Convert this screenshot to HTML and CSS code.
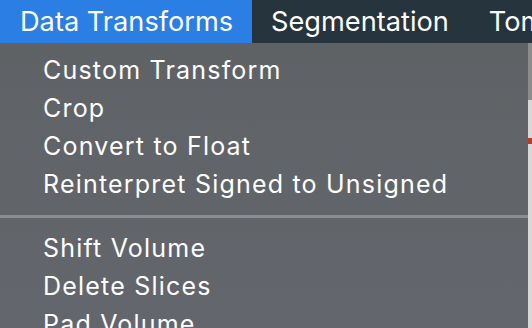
FILE: index.html
```html
<!DOCTYPE html>
<html lang="en">
<head>
    <meta charset="UTF-8">
    <title>Data Transforms menu</title>
    <link rel="stylesheet" href="styles.css">
</head>
<body>
    <div class="menubar">
        <span class="menu-title active">Data Transforms</span>
        <span class="menu-title">Segmentation</span>
        <span class="menu-title">Tomography</span>
    </div>
    <div class="stage">
        <div class="dropdown">
            <div class="item">Custom Transform</div>
            <div class="item">Crop</div>
            <div class="item">Convert to Float</div>
            <div class="item">Reinterpret Signed to Unsigned</div>
            <div class="separator"></div>
            <div class="item">Shift Volume</div>
            <div class="item">Delete Slices</div>
            <div class="item">Pad Volume</div>
        </div>
        <div class="behind">
            <div class="behind-top"></div>
            <div class="behind-red"></div>
        </div>
    </div>
</body>
</html>
```

FILE: styles.css
```css
html, body {
    margin: 0;
    padding: 0;
    width: 532px;
    height: 328px;
    overflow: hidden;
    font-family: "Inter", "Liberation Sans", sans-serif;
    background: #d4d4d4;
}
.menubar {
    display: flex;
    height: 43px;
    background-color: #26343e;
    color: #ffffff;
    font-size: 27.2px;
    white-space: nowrap;
}
.menu-title {
    display: flex;
    align-items: center;
    padding: 0 21px 0 19px;
}
.menu-title.active {
    background-color: #2a7ee4;
    width: 212px;
    padding: 0 20px 0 20px;
}
.stage {
    display: flex;
    height: 285px;
}
.dropdown {
    width: 528px;
    background: linear-gradient(180deg, #5f6265 0%, #63676d 100%);
    color: #ffffff;
    font-size: 25px;
    letter-spacing: 1.2px;
    padding-top: 8px;
}
.item {
    height: 38px;
    line-height: 38px;
    padding-left: 43px;
    white-space: nowrap;
}
.separator {
    height: 3px;
    margin: 12px 0 11px;
    background-color: #8a8d91;
}
.behind {
    flex: 1;
    background-color: #d8d8d8;
}
.behind-top {
    height: 57px;
    background-color: #8c8c8c;
}
.behind-red {
    height: 6px;
    margin-top: 38px;
    background-color: #c0392b;
}
```
